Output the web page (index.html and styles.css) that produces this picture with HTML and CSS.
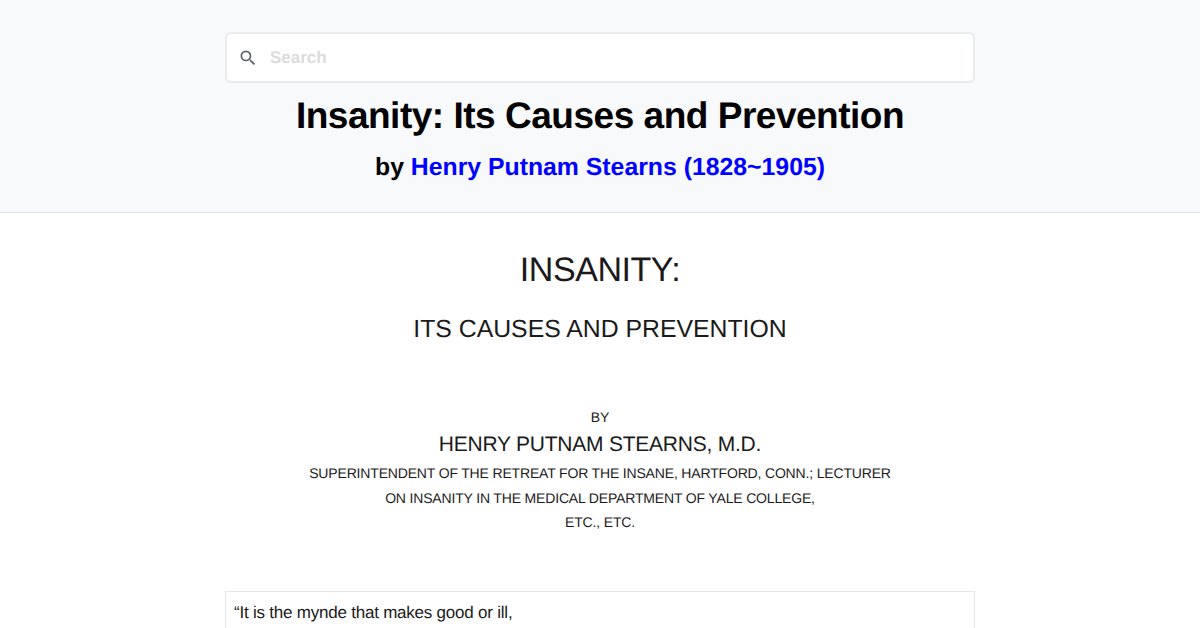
FILE: index.html
```html
<!DOCTYPE html>
<html lang="en">
<head>
    <meta charset="UTF-8">
    <title>Insanity: Its Causes and Prevention</title>
    <link rel="stylesheet" href="styles.css">
</head>
<body>
<div class="top">
    <div class="wrap">
        <div class="search">
            <svg class="search-icon" viewBox="0 0 24 24" width="20" height="20"><path fill="#5f6368" d="M15.5 14h-.79l-.28-.27A6.47 6.47 0 0 0 16 9.5 6.5 6.5 0 1 0 9.5 16c1.61 0 3.09-.59 4.23-1.57l.27.28v.79l5 4.99L20.49 19l-4.99-5zm-6 0C7.01 14 5 11.99 5 9.5S7.01 5 9.5 5 14 7.01 14 9.5 11.99 14 9.5 14z"/></svg>
            <span class="search-text">Search</span>
        </div>
        <h1>Insanity: Its Causes and Prevention</h1>
        <h2>by <a href="#">Henry Putnam Stearns (1828~1905)</a></h2>
    </div>
</div>
<div class="wrap content">
    <div class="t1">INSANITY:</div>
    <div class="t2">ITS CAUSES AND PREVENTION</div>
    <div class="by">BY</div>
    <div class="author">HENRY PUTNAM STEARNS, M.D.</div>
    <div class="small">SUPERINTENDENT OF THE RETREAT FOR THE INSANE, HARTFORD, CONN.; LECTURER<br>ON INSANITY IN THE MEDICAL DEPARTMENT OF YALE COLLEGE,<br>ETC., ETC.</div>
    <div class="quote">“It is the mynde that makes good or ill,</div>
</div>
</body>
</html>
```

FILE: styles.css
```css
* {
    margin: 0;
    padding: 0;
    box-sizing: border-box;
}

html, body {
    height: 628px;
    overflow: hidden;
}

body {
    font-family: "Liberation Sans", Arial, sans-serif;
    color: #1a1a1a;
    background-color: #fff;
    text-rendering: geometricPrecision;
}

a {
    color: #0000ff;
    text-decoration: none;
}

.wrap {
    width: 750px;
    margin: 0 auto;
}

.top {
    height: 213px;
    padding-top: 32px;
    background-color: #f8f9fa;
    border-bottom: 1px solid #e3e5e8;
    text-align: center;
}

.search {
    display: flex;
    align-items: center;
    height: 51px;
    padding-left: 11px;
    background-color: #fff;
    border: 2px solid #e9ebee;
    border-radius: 6px;
}

.search-icon {
    margin-right: 12px;
}

.search-text {
    font-size: 17px;
    font-weight: bold;
    color: #dcdcdc;
}

h1 {
    margin-top: 10px;
    font-size: 37px;
    line-height: 46px;
    letter-spacing: -0.013em;
    color: #000;
}

h2 {
    margin-top: 13px;
    font-size: 24.8px;
    line-height: 32px;
    color: #000;
}

.content {
    text-align: center;
}

.t1 {
    margin-top: 35px;
    font-size: 34px;
    line-height: 44px;
    letter-spacing: -0.013em;
}

.t2 {
    margin-top: 22px;
    font-size: 24.8px;
    line-height: 32px;
}

.by {
    margin-top: 61px;
    font-size: 14px;
    line-height: 20px;
}

.author {
    margin-top: 5px;
    font-size: 21px;
    line-height: 26px;
    letter-spacing: -0.011em;
}

.small {
    margin-top: 3px;
    font-size: 14px;
    line-height: 24.5px;
    letter-spacing: -0.012em;
}

.quote {
    margin-top: 56px;
    height: 60px;
    padding: 10px 8px;
    border: 1px solid #e6e6e6;
    font-size: 17px;
    line-height: 22px;
    letter-spacing: -0.013em;
    text-align: left;
}
```
